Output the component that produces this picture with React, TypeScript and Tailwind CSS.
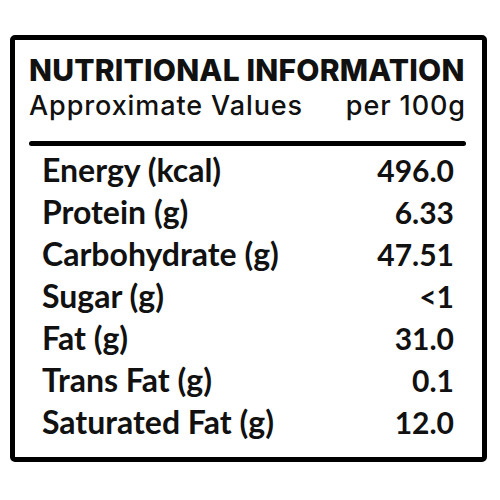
import React from "react";

const rows: [string, string][] = [
  ["Energy (kcal)", "496.0"],
  ["Protein (g)", "6.33"],
  ["Carbohydrate (g)", "47.51"],
  ["Sugar (g)", "<1"],
  ["Fat (g)", "31.0"],
  ["Trans Fat (g)", "0.1"],
  ["Saturated Fat (g)", "12.0"],
];

export default function App() {
  return (
    <div className="w-[500px] h-[500px] bg-white pt-[35px] pl-[10px]">
      <div className="w-[477px] h-[427px] border-[5px] border-black rounded-[5px] bg-white flex flex-col pl-[14px] pr-[16px]">
        <div
          className="mt-[13px] text-[30px] leading-[34px] font-extrabold text-[#111] tracking-[0.2px] whitespace-nowrap"
          style={{ fontFamily: "Inter, 'Noto Sans', sans-serif" }}
        >
          NUTRITIONAL INFORMATION
        </div>
        <div
          className="flex justify-between text-[27px] leading-[32px] font-medium text-[#111] mt-[3px] tracking-[0.9px] whitespace-nowrap"
          style={{ fontFamily: "Inter, 'Noto Sans', sans-serif" }}
        >
          <span>Approximate Values</span>
          <span>per 100g</span>
        </div>
        <div className="mt-[19px] h-[5px] bg-black rounded-full" />
        <div
          className="flex flex-col mt-[3px] pl-[13px] pr-[12px]"
          style={{ fontFamily: "Lato, 'Open Sans', sans-serif" }}
        >
          {rows.map(([k, v]) => (
            <div key={k} className="flex justify-between h-[42px] items-center font-bold text-[#111] whitespace-nowrap">
              <span className="text-[32px]">{k}</span>
              <span className="text-[30px]">{v}</span>
            </div>
          ))}
        </div>
      </div>
    </div>
  );
}
